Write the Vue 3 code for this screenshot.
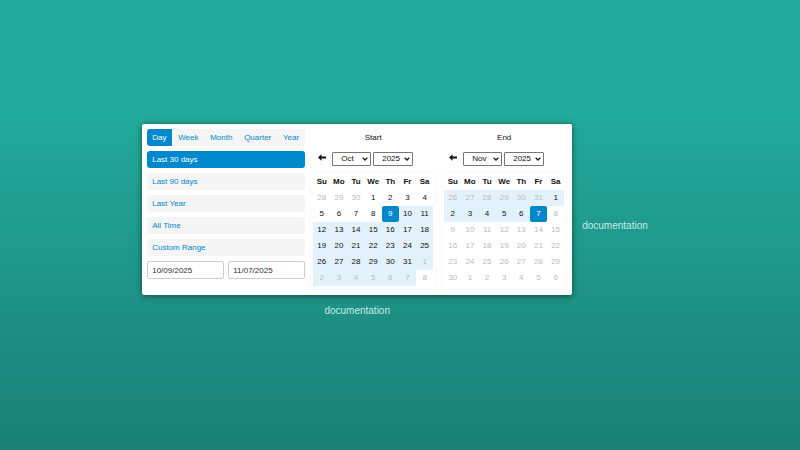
<template>
  <main class="page">
    <div class="demo">
      <section class="picker">
        <div class="ranges">
          <nav class="tabs">
            <button
              v-for="name in periods"
              :key="name"
              type="button"
              class="tab"
              :class="{ active: period === name }"
              @click="period = name"
            >{{ name }}</button>
          </nav>

          <button
            v-for="name in presets"
            :key="name"
            type="button"
            class="preset"
            :class="{ active: preset === name }"
            @click="preset = name"
          >{{ name }}</button>

          <div class="inputs">
            <input v-model="startText" type="text" aria-label="Start date" />
            <input v-model="endText" type="text" aria-label="End date" />
          </div>
        </div>

        <div v-for="cal in calendars" :key="cal.title" class="calendar">
          <div class="title">{{ cal.title }}</div>

          <div class="controls">
            <button type="button" class="arrow" aria-label="Previous month">
              <svg viewBox="0 0 16 14" width="8" height="7">
                <path d="M0 7 L7 0.5 V5 H16 V9 H7 V13.5 Z" fill="#111" />
              </svg>
            </button>
            <span class="select">
              <select v-model="cal.month" :aria-label="cal.title + ' month'">
                <option v-for="m in months" :key="m">{{ m }}</option>
              </select>
              <svg viewBox="0 0 6 4" width="6" height="4">
                <path d="M0.6 0.6 L3 3 L5.4 0.6" fill="none" stroke="#111" stroke-width="1.3" />
              </svg>
            </span>
            <span class="select">
              <select v-model="cal.year" class="year" :aria-label="cal.title + ' year'">
                <option v-for="y in years" :key="y">{{ y }}</option>
              </select>
              <svg viewBox="0 0 6 4" width="6" height="4">
                <path d="M0.6 0.6 L3 3 L5.4 0.6" fill="none" stroke="#111" stroke-width="1.3" />
              </svg>
            </span>
          </div>

          <table class="days">
            <thead>
              <tr>
                <th v-for="d in weekdays" :key="d">{{ d }}</th>
              </tr>
            </thead>
            <tbody>
              <tr v-for="(week, w) in cal.weeks" :key="w">
                <td v-for="(day, d) in week" :key="d" :class="day.state">{{ day.num }}</td>
              </tr>
            </tbody>
          </table>
        </div>
      </section>

      <a href="#" class="doc">documentation</a>
    </div>

    <a href="#" class="doc">documentation</a>
  </main>
</template>

<script setup>
import { ref, reactive } from 'vue'

const periods = ['Day', 'Week', 'Month', 'Quarter', 'Year']
const presets = ['Last 30 days', 'Last 90 days', 'Last Year', 'All Time', 'Custom Range']
const weekdays = ['Su', 'Mo', 'Tu', 'We', 'Th', 'Fr', 'Sa']
const months = ['Jan', 'Feb', 'Mar', 'Apr', 'May', 'Jun', 'Jul', 'Aug', 'Sep', 'Oct', 'Nov', 'Dec']
const years = ['2023', '2024', '2025']

const period = ref('Day')
const preset = ref('Last 30 days')
const startText = ref('10/09/2025')
const endText = ref('11/07/2025')

const rangeStart = new Date(2025, 9, 9)
const rangeEnd = new Date(2025, 10, 7)

// six weeks, starting on the Sunday on or before the 1st
function buildWeeks(year, month, selected) {
  const offset = new Date(year, month, 1).getDay()
  const weeks = []
  for (let w = 0; w < 6; w++) {
    const week = []
    for (let d = 0; d < 7; d++) {
      const date = new Date(year, month, 1 - offset + w * 7 + d)
      week.push({
        num: date.getDate(),
        state: {
          outside: date.getMonth() !== month || date > rangeEnd,
          'in-range': date >= rangeStart && date <= rangeEnd,
          selected: date.getTime() === selected.getTime(),
        },
      })
    }
    weeks.push(week)
  }
  return weeks
}

const calendars = reactive([
  { title: 'Start', month: 'Oct', year: '2025', weeks: buildWeeks(2025, 9, rangeStart) },
  { title: 'End', month: 'Nov', year: '2025', weeks: buildWeeks(2025, 10, rangeEnd) },
])
</script>

<style>
body {
  margin: 0;
}
</style>

<style scoped>
.page {
  display: flex;
  align-items: center;
  justify-content: center;
  min-height: 100vh;
  background: linear-gradient(to bottom, #22aa9b 25%, #1a7f74 100%);
  font-family: "Liberation Sans", Arial, sans-serif;
  font-size: 8px;
  color: #111;
}

.demo {
  display: flex;
  flex-direction: column;
  align-items: center;
}

.doc {
  padding: 10px 10px 9px;
  font-size: 10px;
  line-height: 12px;
  color: #c8e9e5;
  text-decoration: none;
}

button,
input,
select {
  box-sizing: border-box;
  margin: 0;
  font: inherit;
}

.picker {
  display: grid;
  grid-template-columns: 158px 126px 126px;
  gap: 5px;
  padding: 5px 5px 6px;
  background: #fff;
  border-radius: 2px;
  box-shadow: 0 1px 6px rgba(0, 0, 0, 0.5);
}

.ranges {
  display: flex;
  flex-direction: column;
  gap: 5px;
}

.tabs {
  display: flex;
  justify-content: space-between;
  background: #f5f5f5;
  border-radius: 3px;
  overflow: hidden;
}

.tab,
.preset {
  height: 17px;
  padding: 0 6px 0 5px;
  border: 0;
  background: #f5f5f5;
  color: #0088cc;
  text-align: left;
  cursor: pointer;
}

.preset {
  border-radius: 3px;
}

.tab.active,
.preset.active {
  background: #0088cc;
  color: #fff;
}

.inputs {
  display: grid;
  grid-template-columns: 1fr 1fr;
  gap: 4px;
}

.inputs input {
  width: 100%;
  height: 18px;
  padding: 0 4px;
  border: 1px solid #ccc;
  border-radius: 2px;
  color: #333;
}

.calendar {
  display: flex;
  flex-direction: column;
}

.title {
  line-height: 17px;
  text-align: center;
}

.controls {
  display: flex;
  align-items: center;
  gap: 2px;
  height: 25px;
}

.arrow {
  display: flex;
  justify-content: flex-end;
  width: 20px;
  height: 10px;
  padding: 0 4px 0 0;
  border: 0;
  background: none;
}

.select {
  position: relative;
}

.select select {
  display: block;
  appearance: none;
  width: 39px;
  height: 14px;
  padding: 0 0 0 8px;
  border: 1px solid #767676;
  border-radius: 1px;
  background: #fff;
  color: #111;
}

.select .year {
  width: 40px;
}

.select svg {
  position: absolute;
  top: 5px;
  right: 3px;
  pointer-events: none;
}

.days {
  width: 100%;
  padding: 2px;
  border: 1px solid #fafafa;
  border-spacing: 0;
  border-radius: 2px;
  table-layout: fixed;
}

.days th,
.days td {
  height: 16px;
  padding: 0;
  line-height: 16px;
  text-align: center;
}

.days td.in-range {
  background: #e3f2fa;
}

.days td.outside {
  color: #bbb;
}

.days td.selected {
  background: #0088cc;
  border-radius: 2px;
  color: #fff;
}
</style>
